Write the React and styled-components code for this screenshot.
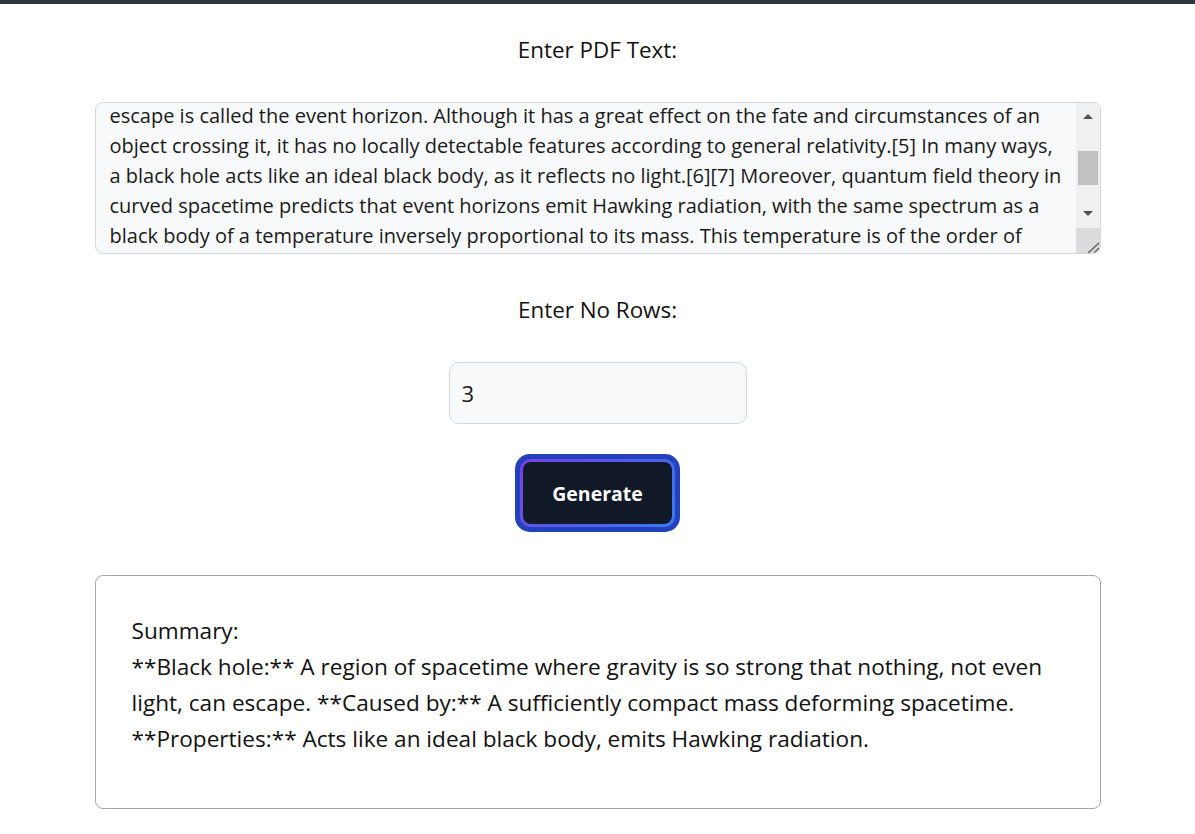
import React, { useEffect, useRef } from "react"
import styled, { createGlobalStyle } from "styled-components"

// line breaks follow the wrapped lines of the source textarea
const pdfText = [
    "A black hole is a region of spacetime where gravity is so strong that nothing, including light and other",
    "electromagnetic waves, is capable of possessing enough energy to escape it.[2] Einstein's theory of general",
    "relativity predicts that a sufficiently compact mass can deform spacetime to form a black hole.[3][4] The boundary of no",
    "escape is called the event horizon. Although it has a great effect on the fate and circumstances of an",
    "object crossing it, it has no locally detectable features according to general relativity.[5] In many ways,",
    "a black hole acts like an ideal black body, as it reflects no light.[6][7] Moreover, quantum field theory in",
    "curved spacetime predicts that event horizons emit Hawking radiation, with the same spectrum as a",
    "black body of a temperature inversely proportional to its mass. This temperature is of the order of",
    "billionths of a kelvin for stellar black holes, making it essentially impossible to observe directly.",
    "Objects whose gravitational fields are too strong for light to escape were first considered in the 18th",
    "century by John Michell and Pierre-Simon Laplace.",
].join("\n")

const GlobalStyle = createGlobalStyle`
    body {
        margin: 0;
        background: #ffffff;
        font-family: "Open Sans", "Noto Sans", sans-serif;
        color: #111111;
    }
`

const TopBar = styled.div`
    height: 4px;
    background: #2f3541;
`

const Page = styled.main`
    width: 1006px;
    margin: 0 auto;
    display: flex;
    flex-direction: column;
    align-items: center;
`

const Label = styled.label`
    font-size: 22.4px;
    line-height: 30px;
    color: #111111;
    margin: ${p => p.$top}px 0 ${p => p.$bottom}px;
`

const TextAreaWrap = styled.div`
    position: relative;
    width: 100%;
    height: 152px;
`

const TextArea = styled.textarea`
    display: block;
    box-sizing: border-box;
    width: 100%;
    height: 100%;
    padding: 2px 40px 2px 14px;
    border: 1px solid #d4d7dc;
    border-radius: 8px;
    background: #f8f9fa;
    font-family: inherit;
    font-size: 20px;
    line-height: 30px;
    color: #1a1a1a;
    white-space: pre;
    overflow: hidden;
    resize: none;
    outline: none;
`

/* classic windows scrollbar drawn over the textarea's right edge */
const ScrollBar = styled.div`
    position: absolute;
    top: 1px;
    right: 1px;
    bottom: 1px;
    width: 24px;
    display: flex;
    flex-direction: column;
    background: #f0f0f0;
    border-radius: 0 7px 7px 0;
    overflow: hidden;
`

const ArrowButton = styled.div`
    height: 24px;
    flex: none;
    display: flex;
    justify-content: center;
    align-items: ${p => (p.$down ? "flex-start" : "flex-end")};
    padding: ${p => (p.$down ? "7px 0 0" : "0 0 8px")};
    box-sizing: border-box;

    &::after {
        content: "";
        width: 0;
        height: 0;
        border-left: 5.5px solid transparent;
        border-right: 5.5px solid transparent;
        ${p => (p.$down ? "border-top" : "border-bottom")}: 5px solid #505050;
    }
`

const Track = styled.div`
    flex: 1;
    padding: 0 2px;
`

const Thumb = styled.div`
    height: 34px;
    background: #c1c1c1;
`

const Corner = styled.div`
    height: 25px;
    flex: none;
    background: #dcdcdc;
`

const NumberInput = styled.input`
    box-sizing: border-box;
    width: 298px;
    height: 62px;
    padding: 0 12px;
    border: 1px solid #d4d7dc;
    border-radius: 10px;
    background: #f8f9fa;
    font-family: inherit;
    font-size: 22px;
    color: #1a1a1a;
    outline: none;
`

const Ring = styled.div`
    margin-top: 30px;
    padding: 5px;
    border-radius: 15px;
    background: #2340bd;
`

const GradientEdge = styled.div`
    padding: 3px;
    border-radius: 11px;
    background: linear-gradient(135deg, #7b3fe4, #4f5fe8 55%, #3b7cf0);
`

const GenerateButton = styled.button`
    display: block;
    width: 149px;
    height: 62px;
    padding-top: 2px;
    border: none;
    border-radius: 8px;
    background: #111827;
    color: #ffffff;
    font-family: inherit;
    font-size: 19.5px;
    font-weight: 700;
    cursor: pointer;
`

const SummaryBox = styled.section`
    box-sizing: border-box;
    width: 100%;
    height: 234px;
    margin-top: 43px;
    padding: 37px 36px 51px;
    border: 1px solid #a3a7ad;
    border-radius: 8px;
    font-size: 22.6px;
    line-height: 36px;
    color: #111111;
`

export default function App() {
    const areaRef = useRef(null)
    const thumbOffset = 24

    useEffect(() => {
        if (areaRef.current) areaRef.current.scrollTop = 94
    }, [])

    return (
        <>
            <GlobalStyle />
            <TopBar />
            <Page>
                <Label $top={31} $bottom={37}>Enter PDF Text:</Label>
                <TextAreaWrap>
                    <TextArea ref={areaRef} wrap="off" defaultValue={pdfText} />
                    <ScrollBar>
                        <ArrowButton />
                        <Track>
                            <Thumb style={{ marginTop: thumbOffset }} />
                        </Track>
                        <ArrowButton $down />
                        <Corner>
                            <svg width="24" height="25" viewBox="0 0 24 25">
                                <line x1="23" y1="15" x2="12" y2="25" stroke="#5a5a5a" strokeWidth="1.3" />
                                <line x1="23" y1="20" x2="18" y2="25" stroke="#5a5a5a" strokeWidth="1.3" />
                            </svg>
                        </Corner>
                    </ScrollBar>
                </TextAreaWrap>
                <Label $top={41} $bottom={37}>Enter No Rows:</Label>
                <NumberInput type="text" defaultValue="3" />
                <Ring>
                    <GradientEdge>
                        <GenerateButton>Generate</GenerateButton>
                    </GradientEdge>
                </Ring>
                <SummaryBox>
                    Summary:<br />
                    **Black hole:** A region of spacetime where gravity is so strong that nothing, not even light, can escape. **Caused by:** A sufficiently compact mass deforming spacetime. **Properties:** Acts like an ideal black body, emits Hawking radiation.
                </SummaryBox>
            </Page>
        </>
    )
}
